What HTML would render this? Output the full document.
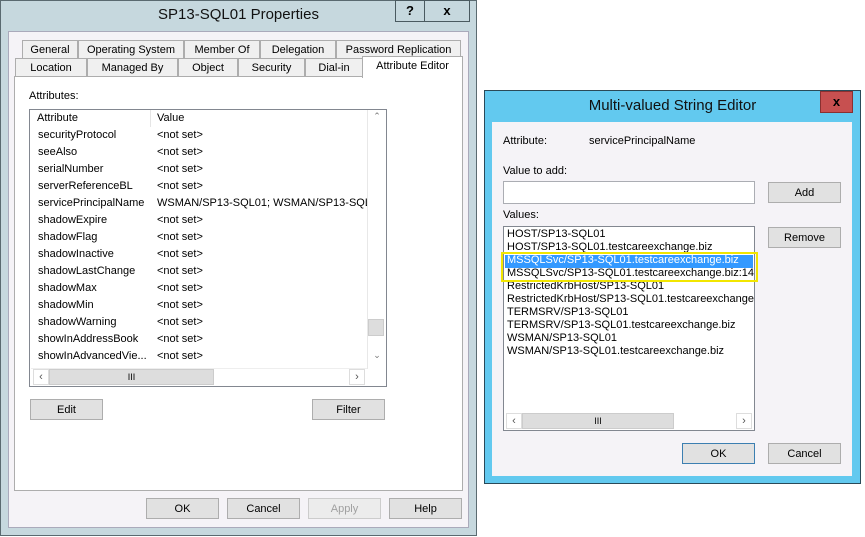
<!DOCTYPE html>
<html><head><style>
*{box-sizing:border-box;margin:0;padding:0}
body{width:865px;height:537px;background:#fff;position:relative;overflow:hidden;font-family:"Liberation Sans",sans-serif;font-size:11px;color:#000}
.a{position:absolute}
.btn{position:absolute;background:#e1e1e1;border:1px solid #adadad;text-align:center;line-height:20px;height:21px}
.tab{position:absolute;background:#f0f0f0;border:1px solid #adadad;border-bottom:none;text-align:center;line-height:18px;height:18px}
.row{position:absolute;left:8px;height:17px;line-height:17px;white-space:nowrap}
.li{position:absolute;left:3px;height:13px;line-height:13px;white-space:nowrap}
</style></head><body>
<!-- Left window -->
<div class="a" style="left:0;top:0;width:477px;height:536px;background:#c6d8de;border:1px solid #5a6a70"></div>
<div class="a" style="left:0;top:6px;width:477px;text-align:center;font-size:15px;color:#111">SP13-SQL01 Properties</div>
<div class="a" style="left:395px;top:0;width:30px;height:22px;border:1px solid #4a5a60;background:#c6d8de;text-align:center;font-weight:bold;font-size:13px;line-height:20px">?</div>
<div class="a" style="left:424px;top:0;width:46px;height:22px;border:1px solid #4a5a60;background:#c6d8de;text-align:center;font-weight:bold;font-size:13px;line-height:20px">x</div>
<div class="a" style="left:8px;top:31px;width:461px;height:497px;background:#f5f3f7;border:1px solid #aab"></div>
<div class="tab" style="left:22px;top:40px;width:56px">General</div>
<div class="tab" style="left:78px;top:40px;width:106px">Operating System</div>
<div class="tab" style="left:184px;top:40px;width:76px">Member Of</div>
<div class="tab" style="left:260px;top:40px;width:76px">Delegation</div>
<div class="tab" style="left:336px;top:40px;width:125px">Password Replication</div>
<div class="tab" style="left:15px;top:58px;width:72px">Location</div>
<div class="tab" style="left:87px;top:58px;width:91px">Managed By</div>
<div class="tab" style="left:178px;top:58px;width:60px">Object</div>
<div class="tab" style="left:238px;top:58px;width:67px">Security</div>
<div class="tab" style="left:305px;top:58px;width:58px">Dial-in</div>
<div class="a" style="left:14px;top:76px;width:449px;height:415px;background:#fff;border:1px solid #adadad"></div>
<div class="a" style="left:362px;top:56px;width:101px;height:22px;background:#fff;border:1px solid #adadad;border-bottom:none;text-align:center;line-height:18px">Attribute Editor</div>
<div class="a" style="left:29px;top:90px">Attributes:</div>
<div class="a" style="left:29px;top:109px;width:358px;height:278px;border:1px solid #828790;background:#fff">
 <div class="a" style="left:1px;top:0;width:120px;height:17px;border-right:1px solid #e5e5e5;line-height:16px;padding-left:6px">Attribute</div>
 <div class="a" style="left:127px;top:0;line-height:16px">Value</div>
 <div class="a" style="left:337px;top:0;width:18px;height:259px;background:#fff;border-left:1px solid #e8e8e8"></div>
 <div class="a" style="left:339px;top:1px;width:16px;text-align:center;color:#777;font-size:9px">&#8963;</div>
 <div class="a" style="left:338px;top:209px;width:16px;height:17px;background:#ddd;border:1px solid #ccc"></div>
 <div class="a" style="left:339px;top:240px;width:16px;text-align:center;color:#777;font-size:9px">&#8964;</div>
 <div class="a" style="left:1px;top:258px;width:336px;height:18px;background:#fff;border-top:1px solid #eee"></div>
 <div class="a" style="left:3px;top:259px;width:16px;height:16px;border:1px solid #ddd;text-align:center;line-height:14px;color:#555">&lsaquo;</div>
 <div class="a" style="left:19px;top:259px;width:165px;height:16px;background:#ddd;border:1px solid #ccc;text-align:center;line-height:14px;font-size:9px">III</div>
 <div class="a" style="left:319px;top:259px;width:16px;height:16px;border:1px solid #ddd;text-align:center;line-height:14px;color:#555">&rsaquo;</div>
 <div style="position:absolute;left:0;top:17px">
 <div class="row" style="top:0">securityProtocol</div><div class="row" style="top:0;left:127px">&lt;not set&gt;</div>
 <div class="row" style="top:17px">seeAlso</div><div class="row" style="top:17px;left:127px">&lt;not set&gt;</div>
 <div class="row" style="top:34px">serialNumber</div><div class="row" style="top:34px;left:127px">&lt;not set&gt;</div>
 <div class="row" style="top:51px">serverReferenceBL</div><div class="row" style="top:51px;left:127px">&lt;not set&gt;</div>
 <div class="row" style="top:68px">servicePrincipalName</div><div class="row" style="top:68px;left:127px;width:210px;overflow:hidden">WSMAN/SP13-SQL01; WSMAN/SP13-SQL01</div>
 <div class="row" style="top:85px">shadowExpire</div><div class="row" style="top:85px;left:127px">&lt;not set&gt;</div>
 <div class="row" style="top:102px">shadowFlag</div><div class="row" style="top:102px;left:127px">&lt;not set&gt;</div>
 <div class="row" style="top:119px">shadowInactive</div><div class="row" style="top:119px;left:127px">&lt;not set&gt;</div>
 <div class="row" style="top:136px">shadowLastChange</div><div class="row" style="top:136px;left:127px">&lt;not set&gt;</div>
 <div class="row" style="top:153px">shadowMax</div><div class="row" style="top:153px;left:127px">&lt;not set&gt;</div>
 <div class="row" style="top:170px">shadowMin</div><div class="row" style="top:170px;left:127px">&lt;not set&gt;</div>
 <div class="row" style="top:187px">shadowWarning</div><div class="row" style="top:187px;left:127px">&lt;not set&gt;</div>
 <div class="row" style="top:204px">showInAddressBook</div><div class="row" style="top:204px;left:127px">&lt;not set&gt;</div>
 <div class="row" style="top:221px">showInAdvancedVie...</div><div class="row" style="top:221px;left:127px">&lt;not set&gt;</div>
 </div>
</div>
<div class="btn" style="left:30px;top:399px;width:73px">Edit</div>
<div class="btn" style="left:312px;top:399px;width:73px">Filter</div>
<div class="btn" style="left:146px;top:498px;width:73px">OK</div>
<div class="btn" style="left:227px;top:498px;width:73px">Cancel</div>
<div class="btn" style="left:308px;top:498px;width:73px;color:#a0a0a0;background:#ececec;border-color:#ccc">Apply</div>
<div class="btn" style="left:389px;top:498px;width:73px">Help</div>

<!-- Right window -->
<div class="a" style="left:484px;top:90px;width:377px;height:394px;background:#62c9ef;border:1px solid #2a4a58"></div>
<div class="a" style="left:484px;top:97px;width:377px;text-align:center;font-size:15px;color:#111">Multi-valued String Editor</div>
<div class="a" style="left:820px;top:91px;width:33px;height:22px;background:#c75050;border:1px solid #8a3030;text-align:center;font-weight:bold;font-size:13px;line-height:19px">x</div>
<div class="a" style="left:492px;top:122px;width:360px;height:354px;background:#f5f3f7"></div>
<div class="a" style="left:503px;top:135px">Attribute:</div>
<div class="a" style="left:589px;top:135px">servicePrincipalName</div>
<div class="a" style="left:503px;top:165px">Value to add:</div>
<div class="a" style="left:503px;top:181px;width:252px;height:23px;background:#fff;border:1px solid #abadb3"></div>
<div class="btn" style="left:768px;top:182px;width:73px">Add</div>
<div class="a" style="left:503px;top:209px">Values:</div>
<div class="a" style="left:503px;top:226px;width:252px;height:205px;background:#fff;border:1px solid #828790;overflow:hidden">
 <div class="li" style="top:1px">HOST/SP13-SQL01</div>
 <div class="li" style="top:14px">HOST/SP13-SQL01.testcareexchange.biz</div>
 <div class="a" style="left:1px;top:28px;width:248px;height:13px;background:#3399ff"></div>
 <div class="li" style="top:27px;color:#fff">MSSQLSvc/SP13-SQL01.testcareexchange.biz</div>
 <div class="li" style="top:40px">MSSQLSvc/SP13-SQL01.testcareexchange.biz:1433</div>
 <div class="li" style="top:53px">RestrictedKrbHost/SP13-SQL01</div>
 <div class="li" style="top:66px">RestrictedKrbHost/SP13-SQL01.testcareexchange.biz</div>
 <div class="li" style="top:79px">TERMSRV/SP13-SQL01</div>
 <div class="li" style="top:92px">TERMSRV/SP13-SQL01.testcareexchange.biz</div>
 <div class="li" style="top:105px">WSMAN/SP13-SQL01</div>
 <div class="li" style="top:118px">WSMAN/SP13-SQL01.testcareexchange.biz</div>
 <div class="a" style="left:1px;top:186px;width:249px;height:17px;background:#fff"></div>
 <div class="a" style="left:2px;top:186px;width:16px;height:16px;border:1px solid #ddd;text-align:center;line-height:14px;color:#555">&lsaquo;</div>
 <div class="a" style="left:18px;top:186px;width:152px;height:16px;background:#ddd;border:1px solid #ccc;text-align:center;line-height:14px;font-size:9px">III</div>
 <div class="a" style="left:232px;top:186px;width:16px;height:16px;border:1px solid #ddd;text-align:center;line-height:14px;color:#555">&rsaquo;</div>
</div>
<div class="a" style="left:501px;top:252px;width:257px;height:30px;border:2px solid #f2e600"></div>
<div class="btn" style="left:768px;top:227px;width:73px">Remove</div>
<div class="btn" style="left:682px;top:443px;width:73px;border-color:#3c7fb1">OK</div>
<div class="btn" style="left:768px;top:443px;width:73px">Cancel</div>
</body></html>
